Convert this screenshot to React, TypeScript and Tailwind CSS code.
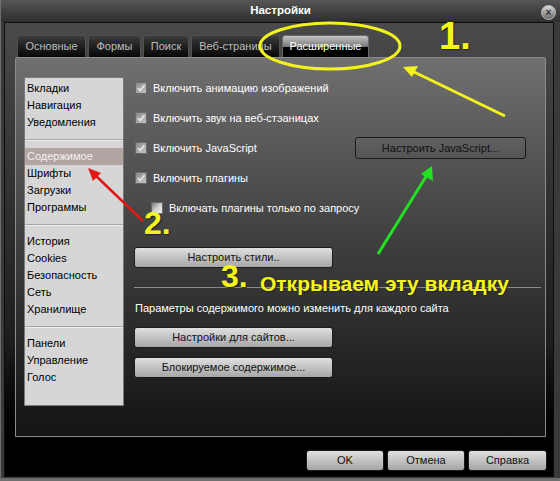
import React from "react";

const tabs = [
  { label: "Основные", w: "w-[69px]" },
  { label: "Формы", w: "w-[53px]" },
  { label: "Поиск", w: "w-[46px]" },
  { label: "Веб-страницы", w: "w-[89px]" },
];

const groups = [
  ["Вкладки", "Навигация", "Уведомления"],
  ["Содержимое", "Шрифты", "Загрузки", "Программы"],
  ["История", "Cookies", "Безопасность", "Сеть", "Хранилище"],
  ["Панели", "Управление", "Голос"],
];

function CheckBox({ checked }: { checked: boolean }) {
  return (
    <div
      className={
        checked
          ? "h-[12px] w-[12px] shrink-0 border border-[#6a6a6a] bg-linear-to-br from-[#8a8a8a] to-[#c4c4c4]"
          : "h-[12px] w-[12px] shrink-0 border border-[#6a6a6a] bg-linear-to-br from-[#7a7a7a] via-[#d0d0d0] to-[#f2f2f2]"
      }
    >
      {checked && (
        <svg viewBox="0 0 10 10" className="h-full w-full">
          <polyline points="2,5 4.2,7.4 8.4,2.2" fill="none" stroke="#e4e4e4" strokeWidth="1.8" />
        </svg>
      )}
    </div>
  );
}

function LightButton({ children, className = "" }: { children: React.ReactNode; className?: string }) {
  return (
    <div
      className={
        "flex h-[21px] items-center justify-center rounded-[3px] border border-[#1c1c1c] bg-linear-to-b from-[#e0e0e0] to-[#a6a6a6] text-[#111] " +
        className
      }
    >
      {children}
    </div>
  );
}

function CheckRow({ label, checked = true }: { label: string; checked?: boolean }) {
  return (
    <div className="flex h-[22px] items-center gap-[6px] pl-[1px]">
      <CheckBox checked={checked} />
      <span className="text-white">{label}</span>
    </div>
  );
}

export default function App() {
  return (
    <div className="relative h-[481px] w-[560px] overflow-hidden bg-[#3a3a3a] font-['Liberation_Sans',Arial,sans-serif] text-[11px]">
      <div className="flex h-full flex-col border-b-[3px] border-l border-[#6e6e6e]">
        {/* TITLE BAR */}
        <div className="relative flex h-[22px] shrink-0 items-center justify-center bg-linear-to-b from-[#565656] to-[#2e2e2e]">
          <span className="text-[11.5px] font-bold text-white">Настройки</span>
          <div className="absolute right-[4px] top-[5px] flex h-[15px] w-[15px] items-center justify-center rounded-full border border-[#bbb] bg-linear-to-b from-[#d8d8d8] to-[#6a6a6a]">
            <span className="text-[10px] font-bold leading-none text-[#333]">×</span>
          </div>
        </div>

        {/* BODY */}
        <div className="mb-[1px] ml-[3px] mr-[6px] flex flex-1 flex-col border border-[#0c0c0c] bg-linear-to-b from-[#4a4a4a] via-[#1e1e1e] via-70% to-black pl-[10px] pr-[7px]">
          {/* TABS */}
          <div className="flex h-[34px] items-end gap-[2px] pl-[2px]">
            {tabs.map((t) => (
              <div
                key={t.label}
                className={`${t.w} flex h-[22px] items-center justify-center rounded-t-[3px] border border-b-0 border-[#505050] bg-linear-to-b from-[#3c3c3c] to-[#080808] text-[#bdbdbd]`}
              >
                {t.label}
              </div>
            ))}
            <div className="relative z-10 flex h-[22px] w-[87px] items-center justify-center rounded-t-[3px] border border-b-0 border-[#6a6a6a] bg-linear-to-b from-[#c4c4c4] via-[#7a7a7a] via-50% to-black to-55% text-white">
              Расширенные
            </div>
          </div>

          {/* PANEL */}
          <div className="flex h-[380px] items-start rounded-t-[2px] border border-[#8c8c8c] bg-linear-to-b from-[#707070] via-[#3e3e3e] via-50% to-[#141414] pl-[8px] pr-[4px] pt-[19px]">
            {/* SIDEBAR */}
            <div className="flex h-[329px] w-[100px] shrink-0 flex-col border border-[#7a7a7a] bg-[#d6d6d6] pt-[2px] text-black">
              {groups.map((g, gi) => (
                <div key={gi}>
                  {gi > 0 && (
                    <div className="flex h-[17px] flex-col justify-center">
                      <div className="h-px bg-[#a4a4a4]" />
                      <div className="h-px bg-[#eeeeee]" />
                    </div>
                  )}
                  {g.map((item) => (
                    <div
                      key={item}
                      className={
                        item === "Содержимое"
                          ? "flex h-[17px] items-center bg-[#b4a5a5] pl-[2px] text-[#f2f2f2]"
                          : "flex h-[17px] items-center pl-[2px]"
                      }
                    >
                      {item}
                    </div>
                  ))}
                </div>
              ))}
            </div>

            {/* CONTENT */}
            <div className="ml-[10px] flex flex-1 flex-col">
              <div className="flex flex-col gap-[8px]">
                <CheckRow label="Включить анимацию изображений" />
                <CheckRow label="Включить звук на веб-стэаницах" />
                <div className="flex items-center">
                  <CheckRow label="Включить JavaScript" />
                  <div className="ml-auto mr-[15px] flex h-[22px] w-[171px] items-center justify-center rounded-[3px] border border-[#1a1a1a] bg-linear-to-b from-[#626262] to-[#545454] text-[#111]">
                    Настроить JavaScript...
                  </div>
                </div>
                <CheckRow label="Включить плагины" />
                <div className="flex h-[22px] items-center gap-[6px] pl-[17px]">
                  <CheckBox checked={false} />
                  <span className="text-white">Включать плагины только по запросу</span>
                </div>
              </div>

              <LightButton className="mt-[28px] w-[199px]">Настроить стили..</LightButton>

              <div className="mt-[19px] h-px bg-[#8a8a8a]" />

              <div className="mt-[13px] flex h-[14px] items-center pl-[1px] text-white">
                Параметры содержимого можно изменить для каждого сайта
              </div>

              <LightButton className="mt-[12px] w-[199px]">Настройки для сайтов...</LightButton>
              <LightButton className="mt-[9px] w-[199px]">Блокируемое содержимое...</LightButton>
            </div>
          </div>

          {/* FOOTER */}
          <div className="mr-[-1px] mt-[13px] flex justify-end gap-[3px]">
            <LightButton className="w-[78px]">OK</LightButton>
            <LightButton className="w-[78px]">Отмена</LightButton>
            <LightButton className="w-[79px]">Справка</LightButton>
          </div>
        </div>
      </div>

      {/* ANNOTATIONS */}
      <svg className="pointer-events-none absolute inset-0" width="560" height="481" viewBox="0 0 560 481">
        <ellipse cx="330" cy="46" rx="70" ry="23" fill="none" stroke="#f2f21e" strokeWidth="3" />
        <line x1="505" y1="116" x2="412" y2="71" stroke="#f2f21e" strokeWidth="3" />
        <polygon points="403,67 418,66 412,77" fill="#f2f21e" />
        <line x1="143" y1="221" x2="94" y2="174" stroke="#e01818" strokeWidth="2.5" />
        <polygon points="88,168 101,173 93,181" fill="#e01818" />
        <line x1="378" y1="254" x2="427" y2="175" stroke="#22e022" strokeWidth="3" />
        <polygon points="432,166 433,181 421,174" fill="#22e022" />
      </svg>
      <span className="pointer-events-none absolute left-[439px] top-[17px] text-[38px] font-bold leading-none text-[#f5f51e] [text-shadow:1px_1px_1px_#222]">
        1.
      </span>
      <span className="pointer-events-none absolute left-[144px] top-[207px] text-[32px] font-bold leading-none text-[#f5f51e] [text-shadow:1px_1px_1px_#222]">
        2.
      </span>
      <span className="pointer-events-none absolute left-[221px] top-[266px] text-[32px] font-bold leading-[20px] text-[#f5f51e] [text-shadow:1px_1px_1px_#222]">
        3.
      </span>
      <span className="pointer-events-none absolute left-[260px] top-[273px] text-[21px] font-bold leading-none text-[#f5f51e] [text-shadow:1px_1px_1px_#222]">
        Открываем эту вкладку
      </span>
    </div>
  );
}
